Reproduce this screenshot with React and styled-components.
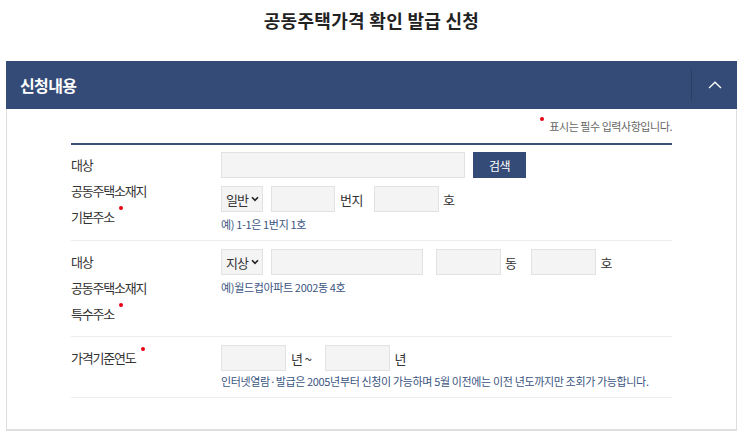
import React from "react";
import styled, { createGlobalStyle } from "styled-components";

const Global = createGlobalStyle`
  html, body { margin: 0; padding: 0; background: #fff; }
  body { font-family: "Noto Sans CJK KR", "Noto Sans", sans-serif; color: #333; }
  * { box-sizing: border-box; }
`;

const Page = styled.div`
  width: 743px;
  height: 436px;
  overflow: hidden;
`;

const Title = styled.h1`
  margin: 0;
  height: 61px;
  display: flex;
  justify-content: center;
  align-items: flex-start;
  padding-top: 6px;
  font-size: 18px;
  font-weight: 700;
  letter-spacing: 0.3px;
  line-height: 28px;
  color: #222;
`;

const Panel = styled.section`
  margin: 0 6px;
  border: 1px solid #dedede;
  border-top: none;
  border-bottom-width: 2px;
`;

const PanelHead = styled.div`
  height: 48px;
  margin: 0 -1px;
  background: #344b77;
  display: flex;
  align-items: center;
  justify-content: space-between;
`;

const HeadTitle = styled.h2`
  margin: 0 0 0 14px;
  font-size: 16px;
  font-weight: 700;
  letter-spacing: -0.6px;
  color: #fff;
`;

const Toggle = styled.button`
  width: 46px;
  height: 32px;
  border: none;
  border-left: 1px solid #2b3f66;
  background: transparent;
  display: flex;
  align-items: center;
  justify-content: center;
  padding: 0;
  cursor: pointer;
`;

const Body = styled.div`
  padding: 9px 64px 31px;
`;

const Note = styled.p`
  margin: 0 0 9px;
  text-align: right;
  font-size: 11px;
  line-height: 16px;
  letter-spacing: -0.45px;
  color: #666;
`;

const Dot = styled.span`
  display: inline-block;
  width: 4px;
  height: 4px;
  border-radius: 50%;
  background: #e60012;
  vertical-align: top;
  margin: ${(p) => p.$m || "0 4px 0 0"};
  position: relative;
  top: ${(p) => p.$top || "0px"};
`;

const Form = styled.div`
  border-top: 2px solid #3a4f78;
`;

const Row = styled.div`
  display: flex;
  padding: ${(p) => p.$pt || 8}px 0 ${(p) => p.$pb || 7}px;
  border-bottom: 1px solid #ececec;
`;

const Label = styled.div`
  width: 150px;
  flex: none;
  font-size: 13px;
  line-height: 26px;
  letter-spacing: -1.2px;
  color: #333;
`;

const Content = styled.div`
  flex: 1;
  display: flex;
  flex-direction: column;
  gap: 8px;
`;

const Line = styled.div`
  display: flex;
  align-items: center;
  height: 26px;
`;

const Input = styled.input`
  width: ${(p) => p.$w}px;
  height: 26px;
  margin-left: ${(p) => p.$ml || 0}px;
  border: 1px solid #e2e2e2;
  background: #f4f4f4;
  outline: none;
  padding: 0 6px;
  font: inherit;
`;

const SelectBox = styled.div`
  width: 42px;
  height: 26px;
  border: 1px solid #e2e2e2;
  background: #f4f4f4;
  display: flex;
  align-items: center;
  padding-left: 4px;
  gap: 3px;
  font-size: 13px;
  letter-spacing: -1px;
  color: #333;
`;

const Unit = styled.span`
  font-size: 13px;
  letter-spacing: -0.5px;
  white-space: pre;
  color: #333;
  margin-left: ${(p) => p.$ml || 0}px;
  margin-right: ${(p) => p.$mr || 0}px;
`;

const SearchBtn = styled.button`
  width: 53px;
  height: 26px;
  margin-left: 8px;
  border: none;
  background: #344b77;
  color: #fff;
  font: inherit;
  font-size: 12px;
  letter-spacing: -0.5px;
  padding: 0;
`;

const Hint = styled.p`
  margin: ${(p) => p.$mt || "-5px"} 0 0;
  font-size: 11px;
  line-height: 18px;
  letter-spacing: -0.35px;
  color: #3b5582;
`;

const Chevron = () => (
  <svg width="8" height="6" viewBox="0 0 8 6">
    <path d="M1 1.2 L4 4.4 L7 1.2" fill="none" stroke="#222" strokeWidth="1.6" />
  </svg>
);

const Req = () => <Dot $m="0 0 0 5px" $top="2px" />;

export default function App() {
  return (
    <Page>
      <Global />
      <Title>공동주택가격 확인 발급 신청</Title>
      <Panel>
        <PanelHead>
          <HeadTitle>신청내용</HeadTitle>
          <Toggle aria-label="접기">
            <svg width="14" height="8" viewBox="0 0 14 8">
              <path d="M1 7 L7 1.2 L13 7" fill="none" stroke="#fff" strokeWidth="1.3" />
            </svg>
          </Toggle>
        </PanelHead>
        <Body>
          <Note>
            <Dot $m="0 5px 0 0" $top="-1px" />
            표시는 필수 입력사항입니다.
          </Note>
          <Form>
            <Row $pt={7} $pb={7}>
              <Label>
                대상
                <br />
                공동주택소재지
                <br />
                기본주소
                <Req />
              </Label>
              <Content>
                <Line>
                  <Input $w={244} />
                  <SearchBtn>검색</SearchBtn>
                </Line>
                <Line>
                  <SelectBox>
                    일반 <Chevron />
                  </SelectBox>
                  <Input $w={64} $ml={8} />
                  <Unit $ml={5} $mr={11}>번지</Unit>
                  <Input $w={65} />
                  <Unit $ml={4}>호</Unit>
                </Line>
                <Hint>예) 1-1은 1번지 1호</Hint>
              </Content>
            </Row>
            <Row $pt={8} $pb={9}>
              <Label>
                대상
                <br />
                공동주택소재지
                <br />
                특수주소
                <Req />
              </Label>
              <Content>
                <Line>
                  <SelectBox>
                    지상 <Chevron />
                  </SelectBox>
                  <Input $w={152} $ml={8} />
                  <Input $w={65} $ml={13} />
                  <Unit $ml={4} $mr={15}>동</Unit>
                  <Input $w={65} />
                  <Unit $ml={4}>호</Unit>
                </Line>
                <Hint>예)월드컵아파트 2002동 4호</Hint>
              </Content>
            </Row>
            <Row $pt={8} $pb={7}>
              <Label>
                가격기준연도
                <Req />
              </Label>
              <Content>
                <Line>
                  <Input $w={65} />
                  <Unit $ml={5} $mr={13}>{"년 ~"}</Unit>
                  <Input $w={65} />
                  <Unit $ml={5}>년</Unit>
                </Line>
                <Hint $mt="-7px">
                  인터넷열람·발급은 2005년부터 신청이 가능하며 5월 이전에는 이전 년도까지만 조회가 가능합니다.
                </Hint>
              </Content>
            </Row>
          </Form>
        </Body>
      </Panel>
    </Page>
  );
}
